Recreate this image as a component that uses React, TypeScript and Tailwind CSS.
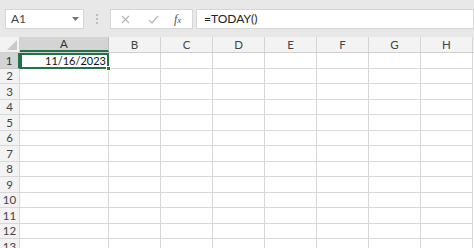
import React from "react";

const cols = [
  { l: "A", w: 89 },
  { l: "B", w: 52 },
  { l: "C", w: 52 },
  { l: "D", w: 52 },
  { l: "E", w: 52 },
  { l: "F", w: 52 },
  { l: "G", w: 52 },
  { l: "H", w: 52 },
];

const rows = Array.from({ length: 13 }, (_, i) => i + 1);

export default function App() {
  return (
    <div className="w-[474px] h-[248px] overflow-hidden bg-white text-[#333]" style={{ fontFamily: 'Lato, "Noto Sans", sans-serif' }}>
      {/* formula bar */}
      <div className="h-[37px] bg-[#e8e8e8] flex items-start pt-[9px]">
        <div className="ml-[5px] w-[79px] h-[20px] bg-white border border-[#d6d6d6] flex items-center justify-between pl-[5px] pr-[4px]">
          <span className="text-[12px] text-[#444]">A1</span>
          <svg width="7" height="4" viewBox="0 0 7 4"><path d="M0 0h7L3.5 4z" fill="#777" /></svg>
        </div>
        <div className="w-[26px] h-[20px] flex flex-col items-center justify-center gap-[2px]">
          <span className="w-[2px] h-[2px] bg-[#bdbdbd]" />
          <span className="w-[2px] h-[2px] bg-[#bdbdbd]" />
          <span className="w-[2px] h-[2px] bg-[#bdbdbd]" />
        </div>
        <div className="w-[83px] h-[20px] bg-white border border-[#d6d6d6] flex items-center">
          <svg className="ml-[10px]" width="9" height="9" viewBox="0 0 9 9"><path d="M1 1L8 8M8 1L1 8" stroke="#b5b5b5" strokeWidth="1.2" /></svg>
          <svg className="ml-[18px]" width="11" height="9" viewBox="0 0 11 9"><path d="M1 5L4 8L10 1" stroke="#b5b5b5" strokeWidth="1.2" fill="none" /></svg>
          <span className="ml-[15px] text-[12px] italic text-[#555]" style={{ fontFamily: '"Liberation Serif", serif' }}>f<span className="text-[9px]">x</span></span>
        </div>
        <div className="ml-[3px] flex-1 h-[20px] bg-white border border-[#d6d6d6] flex items-center pl-[7px]">
          <span className="text-[12px] text-[#222]">=TODAY()</span>
        </div>
      </div>
      {/* header row */}
      <div className="flex h-[16px] bg-[#f3f3f3] border-b border-[#cfcfcf]">
        <div className="w-[20px] shrink-0 relative border-r border-[#cfcfcf] bg-[#f3f3f3]">
          <svg className="absolute right-[2px] bottom-[2px]" width="10" height="10" viewBox="0 0 10 10"><path d="M10 0V10H0z" fill="#c9c9c9" /></svg>
        </div>
        {cols.map((c, i) => (
          <div
            key={c.l}
            style={{ width: c.w }}
            className={
              i === 0
                ? "shrink-0 flex items-center justify-center text-[11.5px] text-[#2f2f2f] bg-[#d4d4d4] border-r border-[#c0c0c0] border-b-2 border-b-[#217346]"
                : "shrink-0 flex items-center justify-center text-[11.5px] text-[#444] border-r border-[#d4d4d4]"
            }
          >
            {c.l}
          </div>
        ))}
      </div>
      {/* rows */}
      {rows.map((r) => (
        <div key={r} className="flex h-[15.5px]">
          <div
            className={
              r === 1
                ? "w-[20px] shrink-0 flex items-center justify-center text-[11.5px] text-[#333] bg-[#d4d4d4] border-r-2 border-r-[#217346] border-b border-[#c8c8c8]"
                : "w-[20px] shrink-0 flex items-center justify-center text-[11.5px] text-[#444] bg-[#f3f3f3] border-r border-[#cfcfcf] border-b border-[#d8d8d8]"
            }
          >
            {r}
          </div>
          {cols.map((c, i) => (
            <div
              key={c.l}
              style={{ width: c.w }}
              className={
                r === 1 && i === 0
                  ? "shrink-0 relative border-2 border-[#217346] flex items-center justify-end pr-[1px] text-[11px] text-[#111]"
                  : "shrink-0 border-r border-b border-[#d8d8d8]"
              }
            >
              {r === 1 && i === 0 ? (
                <>
                  <span>11/16/2023</span>
                  <span className="absolute right-[-4px] bottom-[-4px] w-[5px] h-[5px] bg-[#217346] border border-white" />
                </>
              ) : null}
            </div>
          ))}
        </div>
      ))}
    </div>
  );
}
